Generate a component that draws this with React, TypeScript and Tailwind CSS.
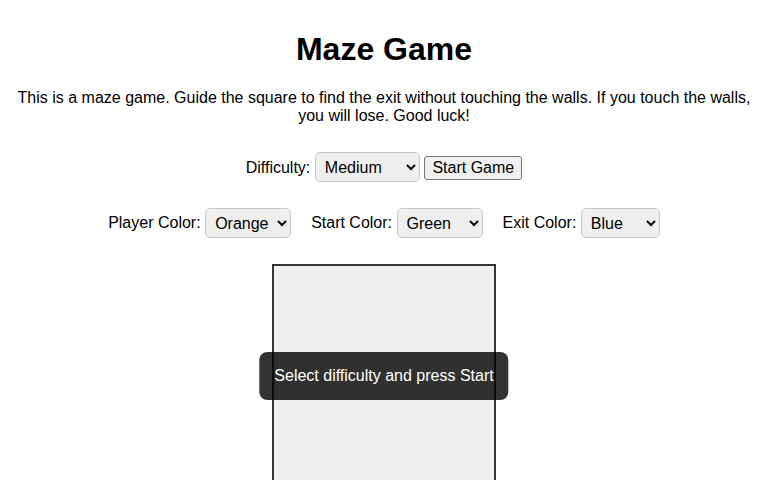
import { useState } from 'react'

const difficulties = ['Easy', 'Medium', 'Hard', 'Very Hard']
const colors = ['Red', 'Orange', 'Yellow', 'Green', 'Blue', 'Purple']

const selectCls =
  'h-[30px] rounded-[5px] border border-[#c8c8c8] bg-[#efefef] px-[5px] pt-[1px] text-[16px] text-black'

export default function App() {
  const [difficulty, setDifficulty] = useState('Medium')
  const [player, setPlayer] = useState('Orange')
  const [start, setStart] = useState('Green')
  const [exit, setExit] = useState('Blue')

  return (
    <div className="min-h-screen bg-white p-2 text-center text-[16px] text-black font-['Liberation_Sans',Arial,sans-serif]">
      <h1 className="mt-[23px] text-[32px] font-bold leading-[37px]">Maze Game</h1>
      <p className="mt-[21.44px] leading-[18px]">
        This is a maze game. Guide the square to find the exit without touching the walls. If you
        touch the walls, you will lose. Good luck!
      </p>

      {/* Difficulty row */}
      <div className="mt-[27px] flex items-center justify-center gap-[4.5px]">
        <label htmlFor="difficulty" className="pt-[1px]">Difficulty:</label>
        <select
          id="difficulty"
          value={difficulty}
          onChange={(e) => setDifficulty(e.target.value)}
          className={`${selectCls} w-[105px]`}
        >
          {difficulties.map((d) => (
            <option key={d}>{d}</option>
          ))}
        </select>
        <button className="mt-[1px] h-[24px] w-[98px] rounded-[3px] border border-[#767676] bg-[#efefef] text-[16px] leading-none">
          Start Game
        </button>
      </div>

      {/* Color row */}
      <div className="mt-[26px] flex items-center justify-center gap-[20px]">
        <div className="flex items-center gap-[4.5px]">
          <label>Player Color:</label>
          <select value={player} onChange={(e) => setPlayer(e.target.value)} className={`${selectCls} w-[86px]`}>
            {colors.map((c) => (
              <option key={c}>{c}</option>
            ))}
          </select>
        </div>
        <div className="flex items-center gap-[4.5px]">
          <label>Start Color:</label>
          <select value={start} onChange={(e) => setStart(e.target.value)} className={`${selectCls} w-[86px]`}>
            {colors.map((c) => (
              <option key={c}>{c}</option>
            ))}
          </select>
        </div>
        <div className="flex items-center gap-[4.5px]">
          <label>Exit Color:</label>
          <select value={exit} onChange={(e) => setExit(e.target.value)} className={`${selectCls} w-[79px]`}>
            {colors.map((c) => (
              <option key={c}>{c}</option>
            ))}
          </select>
        </div>
      </div>

      {/* Maze */}
      <div className="relative mx-auto mt-[26px] h-[224px] w-[224px]">
        <div className="h-full w-full border-2 border-[#333] bg-[#efefef]" />
        <div className="absolute left-1/2 top-1/2 -translate-x-1/2 -translate-y-1/2 whitespace-nowrap rounded-[8px] bg-black/80 px-[15px] py-[15px] leading-[18px] text-white">
          Select difficulty and press Start
        </div>
      </div>
    </div>
  )
}
